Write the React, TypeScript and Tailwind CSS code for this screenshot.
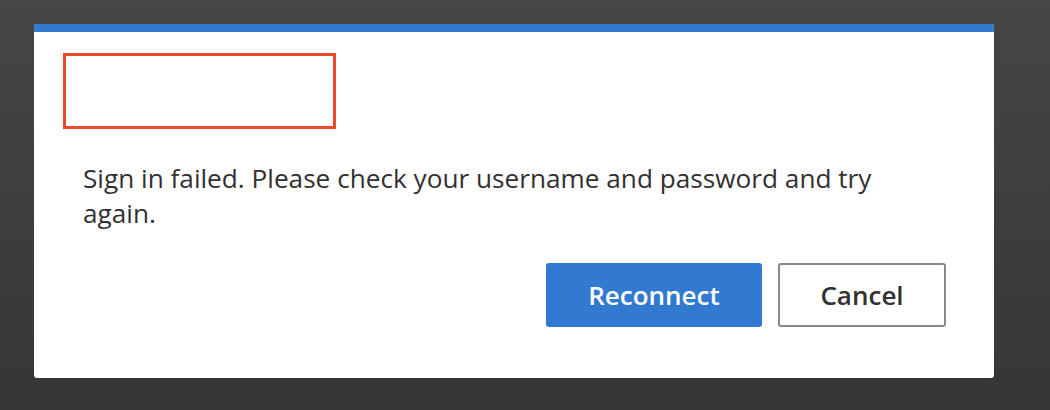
import React from 'react';

export default function App() {
  return (
    <div
      className="w-[1050px] h-[410px] bg-gradient-to-b from-[#484644] to-[#373634] pt-[24px] pl-[34px]"
      style={{ fontFamily: '"Open Sans", "Noto Sans", sans-serif' }}
    >
      <div className="w-[960px] h-[354px] bg-white rounded-[3px] overflow-hidden flex flex-col">
        <div className="h-[8px] bg-[#3279d1]" />
        <div className="pl-[29px] pt-[21px]">
          <div className="w-[273px] h-[76px] border-[3px] border-[#ea4a2c]" />
        </div>
        <p className="pl-[49px] pr-[80px] mt-[32px] text-[26.2px] leading-[35px] text-[#323130]">
          Sign in failed. Please check your username and password and try again.
        </p>
        <div className="flex justify-end gap-[16px] pr-[48px] mt-[32px]">
          <button className="w-[216px] h-[64px] rounded-[3px] bg-[#3279d1] text-white text-[26px] font-semibold">
            Reconnect
          </button>
          <button className="w-[168px] h-[64px] rounded-[3px] border-2 border-[#8a8886] bg-white text-[#323130] text-[26px] font-semibold">
            Cancel
          </button>
        </div>
      </div>
    </div>
  );
}
